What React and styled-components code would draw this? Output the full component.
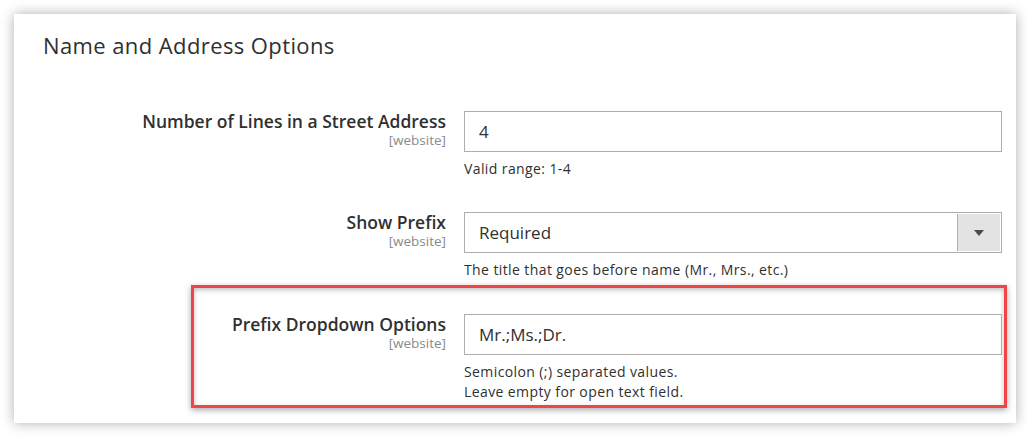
import React from "react";
import styled, { createGlobalStyle } from "styled-components";

const GlobalStyle = createGlobalStyle`
  html, body {
    margin: 0;
    padding: 0;
    background: #ffffff;
  }
  body {
    font-family: "Open Sans", "Liberation Sans", sans-serif;
    color: #303030;
  }
`;

const Page = styled.div`
  padding: 14px 14px 15px 14px;
`;

const Card = styled.section`
  background: #ffffff;
  height: 409px;
  box-sizing: border-box;
  box-shadow: 0 0 12px rgba(0, 0, 0, 0.32);
  padding-top: 17px;
`;

const Title = styled.h2`
  margin: 0 0 0 29px;
  font-size: 22px;
  font-weight: 400;
  line-height: 28px;
  letter-spacing: 0.4px;
  color: #303030;
`;

const Fields = styled.div`
  display: flex;
  flex-direction: column;
  margin-top: 52px;
`;

const Row = styled.div`
  display: grid;
  grid-template-columns: 1fr 538px;
  column-gap: 18px;
  padding-right: ${(p) => p.$right}px;
  margin-bottom: ${(p) => p.$gap || 0}px;
`;

const Highlight = styled.div`
  margin: 0 9px 0 177px;
  border: 3px solid #f04545;
  padding: 26px 0 3px 0;
  box-shadow: 0 2px 6px rgba(0, 0, 0, 0.35), inset 0 2px 5px rgba(0, 0, 0, 0.25);
`;

const Label = styled.div`
  text-align: right;
`;

const LabelText = styled.div`
  font-size: 17.5px;
  font-weight: 600;
  line-height: 21px;
  color: #303030;
`;

const Scope = styled.div`
  font-size: 13.5px;
  line-height: 16px;
  color: #8a8a8a;
`;

const Control = styled.div`
  display: flex;
  flex-direction: column;
`;

const Input = styled.div`
  height: 41px;
  box-sizing: border-box;
  border: 1px solid #adadad;
  padding-left: 14px;
  display: flex;
  align-items: center;
  font-size: 17px;
  color: #303030;
`;

const Select = styled(Input)`
  justify-content: space-between;
`;

const ArrowBox = styled.div`
  width: 42px;
  height: 37px;
  margin-right: 1px;
  background: #e3e3e3;
  border-left: 1px solid #adadad;
  display: flex;
  align-items: center;
  justify-content: center;
`;

const Arrow = styled.span`
  width: 0;
  height: 0;
  border-left: 5px solid transparent;
  border-right: 5px solid transparent;
  border-top: 6px solid #514943;
`;

const Note = styled.div`
  margin-top: 7px;
  font-size: 14px;
  line-height: 20px;
  letter-spacing: 0.4px;
  color: #303030;
`;

function Field({ label, value, select, notes, right, gap }) {
  return (
    <Row $right={right} $gap={gap}>
      <Label>
        <LabelText>{label}</LabelText>
        <Scope>[website]</Scope>
      </Label>
      <Control>
        {select ? (
          <Select>
            {value}
            <ArrowBox>
              <Arrow />
            </ArrowBox>
          </Select>
        ) : (
          <Input>{value}</Input>
        )}
        <Note>
          {notes.map((n) => (
            <div key={n}>{n}</div>
          ))}
        </Note>
      </Control>
    </Row>
  );
}

export default function App() {
  return (
    <>
      <GlobalStyle />
      <Page>
        <Card>
          <Title>Name and Address Options</Title>
          <Fields>
            <Field
              label="Number of Lines in a Street Address"
              value="4"
              notes={["Valid range: 1-4"]}
              right={14}
              gap={33}
            />
            <Field
              label="Show Prefix"
              value="Required"
              select
              notes={["The title that goes before name (Mr., Mrs., etc.)"]}
              right={14}
              gap={5}
            />
            <Highlight>
              <Field
                label="Prefix Dropdown Options"
                value="Mr.;Ms.;Dr."
                notes={["Semicolon (;) separated values.", "Leave empty for open text field."]}
                right={2}
              />
            </Highlight>
          </Fields>
        </Card>
      </Page>
    </>
  );
}
